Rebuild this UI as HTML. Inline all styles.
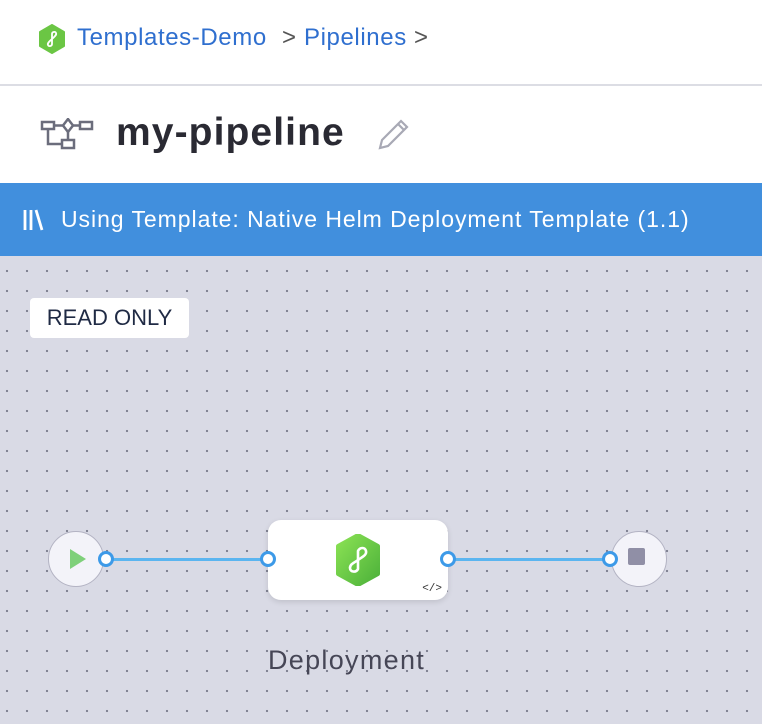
<!DOCTYPE html>
<html><head><style>
body{margin:0;width:762px;height:724px;overflow:hidden;font-family:"Liberation Sans",sans-serif;background:#fff;position:relative}
.crumb{position:absolute;top:0;left:0;width:762px;height:84px;background:#fff}
.crumb span{position:absolute;top:24px;font-size:24px;color:#2f6fcf;letter-spacing:0.6px}
.sep{color:#555!important}
.line{position:absolute;top:84px;left:0;width:762px;height:2px;background:#dcdde4}
.title{position:absolute;top:111px;left:116px;font-size:39px;font-weight:bold;color:#2a2a33;letter-spacing:1.1px}
.banner{position:absolute;top:183px;left:0;width:762px;height:73px;background:#418fdd;color:#fff;font-size:23px}
.banner span{position:absolute;left:61px;top:23px;letter-spacing:0.95px}
.canvas{position:absolute;top:256px;left:0;width:762px;height:468px;background-color:#d9dae5;background-image:radial-gradient(circle,#7d7f8f 1px,transparent 1.3px);background-size:20px 20px;background-position:-3px 5px}
.ro{position:absolute;top:298px;left:30px;width:159px;height:40px;background:#fff;border-radius:4px;font-size:22px;color:#1f2a44;line-height:40px;text-align:center}
.node{position:absolute;top:520px;left:268px;width:180px;height:80px;background:#fff;border-radius:13px;box-shadow:0 2px 6px rgba(0,0,0,.12)}
.circ{position:absolute;top:531px;width:56px;height:56px;border-radius:50%;background:#f3f3f9;border:1.5px solid #b3b3c3;box-sizing:border-box}
.port{position:absolute;width:16px;height:16px;border-radius:50%;background:#fff;border:3.5px solid #3d9ae8;box-sizing:border-box;top:551px}
.edge{position:absolute;top:558px;height:3px;background:#5bb5f0}
.lbl{position:absolute;top:645px;left:268px;font-size:27px;color:#464656;letter-spacing:1.3px}
</style></head><body>
<div class="crumb">
<svg style="position:absolute;left:38px;top:24px" width="28" height="30" viewBox="0 0 28 30"><polygon points="14,1 26,8 26,22 14,29 2,22 2,8" fill="#6bc644" stroke="#6bc644" stroke-width="2" stroke-linejoin="round"/><path d="M14 15c2-2 5-4 4-6s-4-1-4 1v10c0 2-3 3-4 1s2-4 4-6" stroke="#fff" stroke-width="1.8" fill="none"/></svg>
<span style="left:77px">Templates-Demo</span><span class="sep" style="left:282px">&gt;</span><span style="left:304px">Pipelines</span><span class="sep" style="left:414px">&gt;</span>
</div>
<div class="line"></div>
<svg style="position:absolute;left:40px;top:118px" width="56" height="34" viewBox="0 0 56 34" fill="none" stroke="#6b6d7c" stroke-width="2.5"><rect x="2" y="4" width="12" height="7"/><rect x="40" y="4" width="12" height="7"/><rect x="22" y="22" width="12" height="8"/><path d="M28 1l5 6.5-5 6.5-5-6.5z"/><path d="M14 7.5h9M33 7.5h7M8 11v15h14M28 14v8"/></svg>
<div class="title">my-pipeline</div>
<svg style="position:absolute;left:376px;top:118px" width="34" height="34" viewBox="0 0 34 34" fill="none" stroke="#a8a9b5" stroke-width="2.2"><path d="M4 30l2-8L25 3l6 6L12 28z M22 6l6 6"/></svg>
<div class="banner">
<svg style="position:absolute;left:22px;top:26px" width="22" height="22" viewBox="0 0 22 22" stroke="#fff" stroke-width="2.8"><path d="M3 1v20M9 1v20M14 1l6 20"/></svg>
<span>Using Template: Native Helm Deployment Template (1.1)</span></div>
<div class="canvas"></div>
<div class="ro">READ ONLY</div>
<div class="edge" style="left:110px;width:154px"></div>
<div class="edge" style="left:452px;width:154px"></div>
<div class="circ" style="left:48px"><svg style="position:absolute;left:19px;top:17px" width="20" height="20"><polygon points="2,0 18,10 2,20" fill="#7ed07a"/></svg></div>
<div class="circ" style="left:611px"><div style="position:absolute;left:16px;top:16px;width:17px;height:17px;border-radius:2px;background:#908fa6"></div></div>
<div class="node">
<svg style="position:absolute;left:66px;top:14px" width="48" height="52" viewBox="0 0 48 52"><defs><linearGradient id="g" x1="0" y1="0" x2="1" y2="1"><stop offset="0" stop-color="#8be254"/><stop offset="1" stop-color="#4cb13a"/></linearGradient></defs><polygon points="24,1 44,12 44,40 24,51 4,40 4,12" fill="url(#g)" stroke="url(#g)" stroke-width="4" stroke-linejoin="round"/><path d="M24 26C28 23 33 21 32 17S26 13 24 17L24 35C22 39 16 38 16 34S20 29 24 26" stroke="#fff" stroke-width="2.6" fill="none"/></svg>
<div style="position:absolute;right:6px;bottom:5px;font-size:11px;color:#333;font-family:'Liberation Mono',monospace">&lt;/&gt;</div>
</div>
<div class="port" style="left:98px"></div>
<div class="port" style="left:260px"></div>
<div class="port" style="left:440px"></div>
<div class="port" style="left:602px"></div>
<div class="lbl">Deployment</div>
</body></html>
